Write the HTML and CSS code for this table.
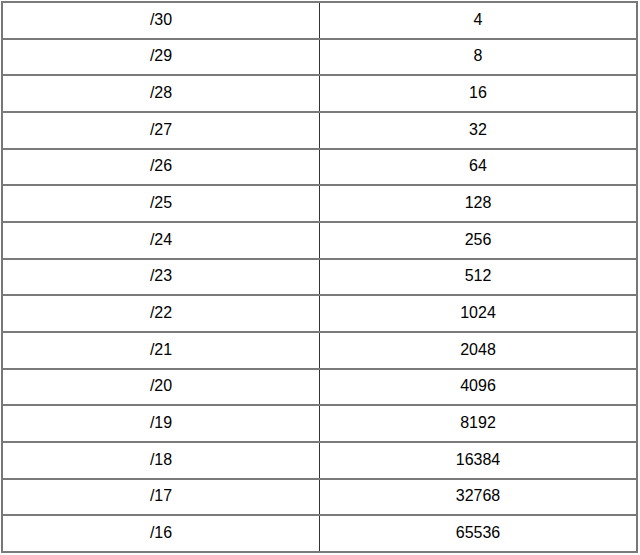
FILE: index.html
```html
<!DOCTYPE html>
<html>
<head>
<meta charset="utf-8">
<link rel="stylesheet" href="styles.css">
</head>
<body>
<table class="grid">
<tr><td>/30</td><td>4</td></tr>
<tr><td>/29</td><td>8</td></tr>
<tr><td>/28</td><td>16</td></tr>
<tr><td>/27</td><td>32</td></tr>
<tr><td>/26</td><td>64</td></tr>
<tr><td>/25</td><td>128</td></tr>
<tr><td>/24</td><td>256</td></tr>
<tr><td>/23</td><td>512</td></tr>
<tr><td>/22</td><td>1024</td></tr>
<tr><td>/21</td><td>2048</td></tr>
<tr><td>/20</td><td>4096</td></tr>
<tr><td>/19</td><td>8192</td></tr>
<tr><td>/18</td><td>16384</td></tr>
<tr><td>/17</td><td>32768</td></tr>
<tr><td>/16</td><td>65536</td></tr>
</table>
</body>
</html>
```
FILE: styles.css
```css
html, body {
  margin: 0;
  padding: 0;
  background: #ffffff;
}
body {
  padding: 1px 0 0 1px;
  font-family: "Liberation Sans", Arial, sans-serif;
  color: #000;
}
.grid {
  border-collapse: collapse;
  width: 637px;
  height: 552px;
  table-layout: fixed;
  border: 2px solid #777;
}
.grid td {
  width: 50%;
  border-top: 2px solid #7a7a7a;
  border-bottom: 2px solid #7a7a7a;
  border-left: 1px solid #333;
  border-right: 1px solid #333;
  text-align: center;
  vertical-align: middle;
  font-size: 16px;
  line-height: 18px;
  padding: 0 0 1px 0;
}
.grid td:first-child {
  border-left: 2px solid #777;
}
.grid td:last-child {
  border-right: 2px solid #777;
}
```
